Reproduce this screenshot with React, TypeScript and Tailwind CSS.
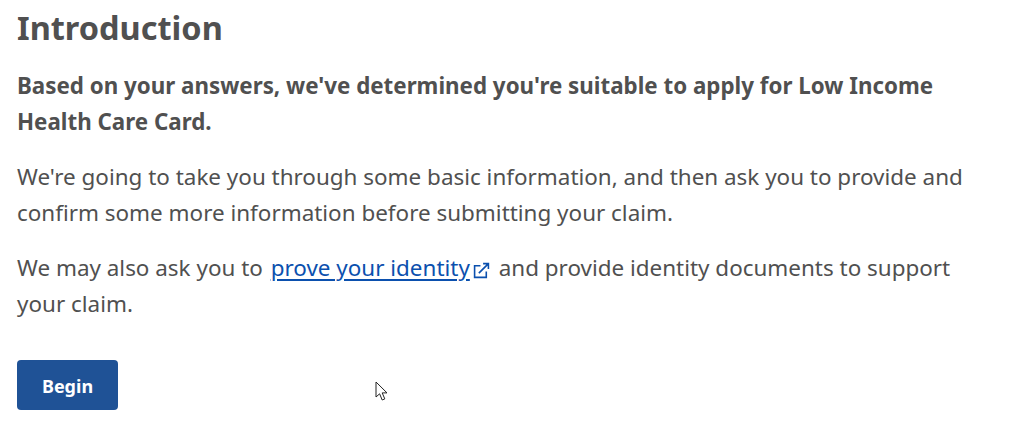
export default function App() {
	return (
		<main className="min-h-[428px] bg-white px-[17px] font-['Noto_Sans',sans-serif] text-[#505050]">
			<h1 className="pt-[6px] text-[32.5px] leading-[44px] font-bold">Introduction</h1>
			<p className="mt-[18px] text-[22.35px] leading-[36px] font-bold">
				Based on your answers, we've determined you're suitable to apply for Low Income
				<br />
				Health Care Card.
			</p>
			<p className="mt-[19px] text-[22.45px] leading-[36px]">
				We're going to take you through some basic information, and then ask you to provide and
				<br />
				confirm some more information before submitting your claim.
			</p>
			<p className="mt-[19px] text-[22.45px] leading-[36px]">
				We may also ask you to{" "}
				<a href="#" className="ml-[2px] text-[#0b50ae] underline decoration-2 underline-offset-[3px]">
					prove your identity
				</a>
				<svg viewBox="0 0 16 16" className="mx-[3px] inline h-[17px] w-[17px] align-[-3px] text-[#0b50ae]" fill="none" stroke="currentColor" strokeWidth="1.5">
					<path d="M7 3.5H1.5v11H12.5V9" />
					<path d="M5.5 10.5 14.5 1.5M9.5 1.5h5v5" />
				</svg>{" "}
				and provide identity documents to support
				<br />
				your claim.
			</p>
			<div className="relative mt-[38px]">
				<button className="h-[50px] w-[101px] rounded-[4px] bg-[#1f5296] pt-[3px] text-[18px] font-bold text-white">Begin</button>
				<svg viewBox="0 0 14 21" className="absolute top-[21px] left-[358px] h-[21px] w-[14px]">
					<path d="M1 1v15l3.6-3.2 2.6 6.2 2.6-1.1-2.6-6h4.8z" fill="#fff" stroke="#222" strokeWidth="1" />
				</svg>
			</div>
		</main>
	);
}
